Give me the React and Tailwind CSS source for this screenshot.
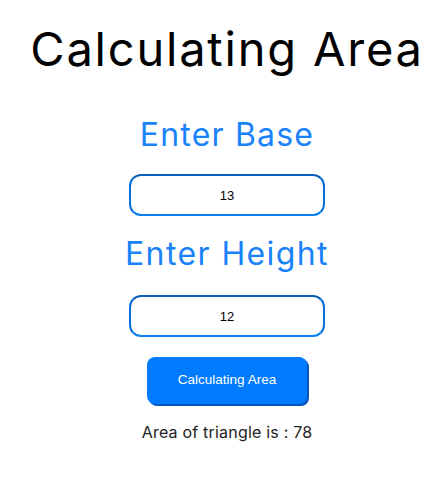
import React, { useState } from "react";

export default function App() {
  const [base, setBase] = useState("13");
  const [height, setHeight] = useState("12");
  const area = (Number(base) * Number(height)) / 2;
  return (
    <div className="w-[438px] h-[483px] bg-white pl-4 flex flex-col items-center overflow-hidden" style={{ fontFamily: "Inter, sans-serif" }}>
      <h1 className="mt-[21px] text-[47px] leading-[56px] text-black font-normal whitespace-nowrap tracking-[1.8px]">Calculating Area</h1>
      <h2 className="mt-[39px] text-[32px] leading-[38px] text-[#1a82fb] font-normal whitespace-nowrap tracking-[1.2px]">Enter Base</h2>
      <input
        value={base}
        onChange={(e) => setBase(e.target.value)}
        className="mt-[20px] w-[196px] h-[42px] rounded-[12px] border-2 border-t-[#0a5fb8] border-x-[#0a6ed8] border-b-[#0a7ff0] text-center text-[13px] text-black outline-none"
        style={{ fontFamily: "'Liberation Sans', Arial, sans-serif" }}
      />
      <h2 className="mt-[19px] text-[32px] leading-[38px] text-[#1a82fb] font-normal whitespace-nowrap tracking-[1.4px]">Enter Height</h2>
      <input
        value={height}
        onChange={(e) => setHeight(e.target.value)}
        className="mt-[22px] w-[196px] h-[42px] rounded-[12px] border-2 border-t-[#0a5fb8] border-x-[#0a6ed8] border-b-[#0a7ff0] text-center text-[13px] text-black outline-none"
        style={{ fontFamily: "'Liberation Sans', Arial, sans-serif" }}
      />
      <button
        className="mt-[20px] w-[160px] h-[47px] rounded-[8px] bg-[#007bff] text-white text-[13.5px] shadow-[2px_2px_0_#0058c0]"
        style={{ fontFamily: "'Liberation Sans', Arial, sans-serif" }}
      >
        Calculating Area
      </button>
      <p className="mt-[18px] text-[16px] leading-[20px] text-[#222] whitespace-nowrap tracking-[0.2px]">Area of triangle is : {area}</p>
    </div>
  );
}
